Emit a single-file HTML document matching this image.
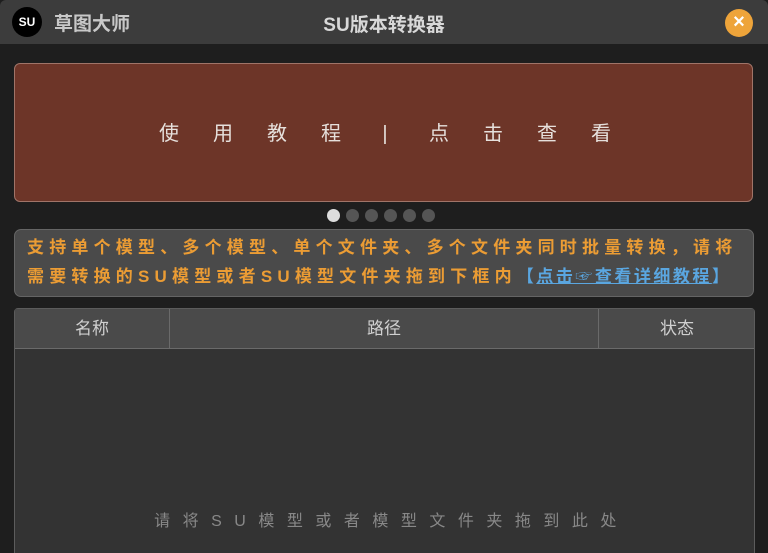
<!DOCTYPE html>
<html><head><meta charset="utf-8"><style>
*{margin:0;padding:0;box-sizing:border-box}
html,body{width:768px;height:553px;overflow:hidden}
body{background:#1e1e1e;font-family:"Liberation Sans","Noto Sans CJK SC",sans-serif;position:relative}
.tb{position:absolute;left:0;top:0;width:768px;height:44px;background:#3c3c3c;border-radius:6px 6px 0 0}
.logo{position:absolute;left:12px;top:7px;width:30px;height:30px;border-radius:50%;background:#000;color:#fff;font-weight:bold;font-size:12px;line-height:30px;text-align:center}
.brand{position:absolute;left:54px;top:9px;font-size:19px;color:#c8c8c8;font-weight:bold}
.title{position:absolute;left:0;width:768px;top:10px;text-align:center;font-size:19px;color:#d8d8d8;font-weight:bold}
.close{position:absolute;left:725px;top:9px;width:28px;height:28px;border-radius:50%;background:#eea43a;color:#fff;font-size:20px;line-height:27px;text-align:center;font-weight:bold}
.banner{position:absolute;left:14px;top:63px;width:739px;height:139px;background:#6d3528;border:1px solid #a07468;border-radius:6px;color:#e6e0dc;font-size:20px}
.banner span{position:absolute;top:0;width:54px;margin-left:-27px;text-align:center;line-height:141px}
.dots{position:absolute;left:327px;top:209px}
.dots span{display:inline-block;width:13px;height:13px;border-radius:50%;background:#555;margin-right:6px}
.dots span:first-child{background:#ddd}
.info{position:absolute;left:14px;top:229px;width:740px;height:68px;background:#4a4a4a;border:1px solid #656565;border-radius:7px;color:#eb9c34;font-weight:bold;font-size:17px;line-height:29px;padding:3px 0 0 12px;letter-spacing:5.2px;white-space:nowrap}
.info a{color:#5aa6e0;text-decoration:underline}
.tbl{position:absolute;left:14px;top:308px;width:741px;height:260px;background:#333;border:1px solid #5c5c5c;border-radius:4px}
.hd{height:40px;background:#4a4a4a;border-bottom:1px solid #6a6a6a;position:relative;color:#d0d0d0;font-size:17px}
.hd div{position:absolute;top:0;height:40px;line-height:39px;text-align:center}
.empty{position:absolute;left:0;width:741px;top:198px;text-align:center;color:#888;font-size:16px;letter-spacing:12.5px;padding-left:12px}
</style></head><body>
<div class="tb"><div class="logo">SU</div><div class="brand">草图大师</div><div class="title">SU版本转换器</div><div class="close">×</div></div>
<div class="banner"><span style="left:154px">使</span><span style="left:208px">用</span><span style="left:262px">教</span><span style="left:316px">程</span><span style="left:370px">|</span><span style="left:424px">点</span><span style="left:478px">击</span><span style="left:532px">查</span><span style="left:586px">看</span></div>
<div class="dots"><span></span><span></span><span></span><span></span><span></span><span></span></div>
<div class="info">支持单个模型、多个模型、单个文件夹、多个文件夹同时批量转换，请将<br>需要转换的SU模型或者SU模型文件夹拖到下框内<span style="color:#5aa6e0;letter-spacing:2.5px">【<a>点击☞查看详细教程</a>】</span></div>
<div class="tbl"><div class="hd">
<div style="left:0;width:155px;border-right:1px solid #6a6a6a">名称</div>
<div style="left:155px;width:429px;border-right:1px solid #6a6a6a">路径</div>
<div style="left:584px;width:156px">状态</div></div>
<div class="empty">请将SU模型或者模型文件夹拖到此处</div></div>
</body></html>
